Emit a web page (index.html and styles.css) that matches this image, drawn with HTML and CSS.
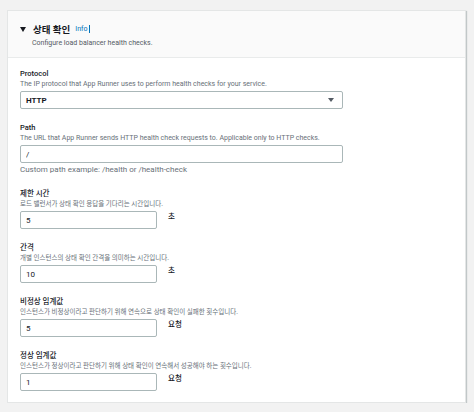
FILE: index.html
```html
<!DOCTYPE html>
<html lang="ko">
<head>
  <meta charset="UTF-8" />
  <title>상태 확인</title>
  <link rel="stylesheet" href="styles.css">
</head>
<body>
  <div class="panel">
    <!-- 헤더 -->
    <div class="panel-head">
      <div class="head-title">
        <span class="caret"></span>
        <h2>상태 확인</h2>
        <a class="info" href="#">Info</a>
      </div>
      <p class="head-desc">Configure load balancer health checks.</p>
    </div>

    <div class="panel-body">
      <div class="field">
        <label for="protocol">Protocol</label>
        <p class="desc en">The IP protocol that App Runner uses to perform health checks for your service.</p>
        <div class="select wide">
          <span>HTTP</span>
          <span class="arrow"></span>
        </div>
      </div>

      <div class="field">
        <label for="path">Path</label>
        <p class="desc en">The URL that App Runner sends HTTP health check requests to. Applicable only to HTTP checks.</p>
        <input class="input wide" id="path" type="text" value="/">
        <p class="hint">Custom path example: /health or /health-check</p>
      </div>

      <div class="field">
        <label for="timeout">제한 시간</label>
        <p class="desc">로드 밸런서가 상태 확인 응답을 기다리는 시간입니다.</p>
        <div class="row">
          <input class="input short" id="timeout" type="text" value="5">
          <span class="unit">초</span>
        </div>
      </div>

      <div class="field">
        <label for="interval">간격</label>
        <p class="desc">개별 인스턴스의 상태 확인 간격을 의미하는 시간입니다.</p>
        <div class="row">
          <input class="input short" id="interval" type="text" value="10">
          <span class="unit">초</span>
        </div>
      </div>

      <div class="field">
        <label for="unhealthy">비정상 임계값</label>
        <p class="desc">인스턴스가 비정상이라고 판단하기 위해 연속으로 상태 확인이 실패한 횟수입니다.</p>
        <div class="row">
          <input class="input short" id="unhealthy" type="text" value="5">
          <span class="unit">요청</span>
        </div>
      </div>

      <div class="field">
        <label for="healthy">정상 임계값</label>
        <p class="desc">인스턴스가 정상이라고 판단하기 위해 상태 확인이 연속해서 성공해야 하는 횟수입니다.</p>
        <div class="row">
          <input class="input short" id="healthy" type="text" value="1">
          <span class="unit">요청</span>
        </div>
      </div>
    </div>
  </div>
</body>
</html>
```

FILE: styles.css
```css
body {
  margin: 0;
  padding: 10px 8px 0 7px;
  background-color: #f2f2f2;
  font-family: Roboto, "Noto Sans CJK KR", sans-serif;
  color: #16191f;
}
.panel {
  width: 457px;
  background: #fff;
  border: 1px solid #e4e6e6;
  box-shadow: 1px 1px 1px rgba(0,28,36,0.2);
}
.panel-head {
  background-color: #fafafa;
  border-bottom: 1px solid #e9ebeb;
  padding: 11px 12px 0;
  height: 35px;
}
.head-title {
  display: flex;
  align-items: center;
  height: 14px;
}
.caret {
  width: 0;
  height: 0;
  border-left: 3px solid transparent;
  border-right: 3px solid transparent;
  border-top: 5px solid #16191f;
  margin-right: 7px;
}
.head-title h2 {
  margin: 0;
  font-size: 9.5px;
  font-weight: 700;
}
.info {
  margin-left: 5px;
  font-size: 7px;
  color: #0073bb;
  text-decoration: none;
  border-right: 1px solid #0073bb;
  padding-right: 1px;
  line-height: 8px;
}
.head-desc {
  margin: 2px 0 0 12px;
  font-size: 7px;
  line-height: 10px;
  color: #545b64;
}
.panel-body {
  padding: 11px 12px 11px;
}
.field + .field {
  margin-top: 14px;
}
.field label {
  display: block;
  font-size: 7.5px;
  font-weight: 500;
  line-height: 10px;
}
.desc {
  margin: 1px 0 0;
  font-size: 6.5px;
  line-height: 9px;
  color: #687078;
}
.desc.en {
  font-size: 7px;
}
.input,
.select {
  box-sizing: border-box;
  height: 18px;
  margin-top: 2px;
  padding: 0 5px;
  border: 1px solid #aab7b8;
  border-radius: 2px;
  background: #fff;
  font-family: inherit;
  font-size: 8px;
  color: #16191f;
  display: block;
}
.select {
  display: flex;
  align-items: center;
  justify-content: space-between;
  font-weight: 700;
  padding-right: 8px;
}
.arrow {
  width: 0;
  height: 0;
  border-left: 3px solid transparent;
  border-right: 3px solid transparent;
  border-top: 4px solid #545b64;
}
.wide {
  width: 323px;
}
.short {
  width: 137px;
}
.hint {
  margin: 2px 0 0;
  font-size: 8px;
  line-height: 10px;
  color: #687078;
}
.row {
  display: flex;
  align-items: flex-start;
}
.unit {
  margin-left: 11px;
  margin-top: 2px;
  font-size: 7.5px;
  line-height: 12px;
  font-weight: 500;
}
```
